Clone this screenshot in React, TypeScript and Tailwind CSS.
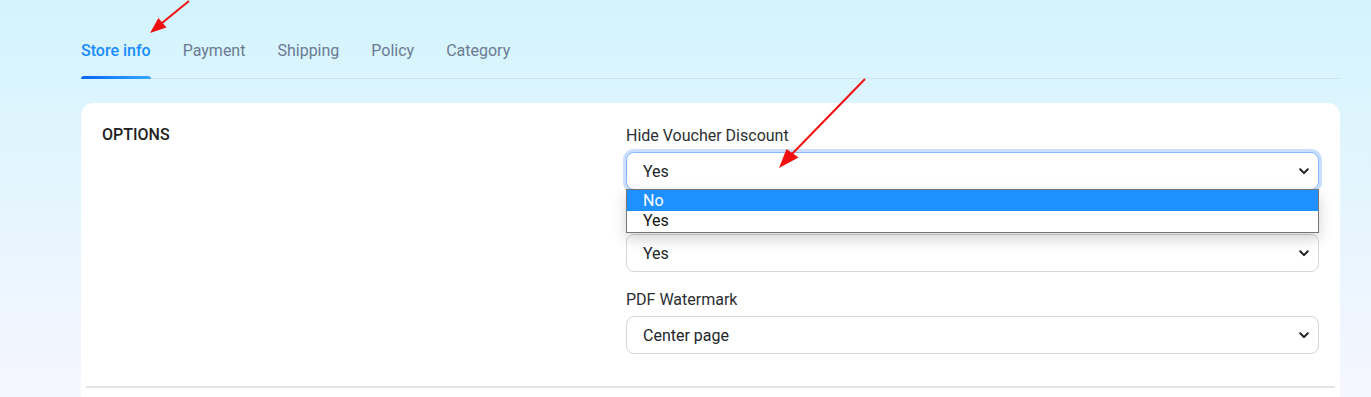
import React from "react";

const tabs = ["Store info", "Payment", "Shipping", "Policy", "Category"];

function Chevron() {
  return (
    <svg width="10" height="7" viewBox="0 0 10 7" className="text-[#222]">
      <path d="M1.2 1.3 5 5.1 8.8 1.3" fill="none" stroke="currentColor" strokeWidth="2" strokeLinecap="round" strokeLinejoin="round" />
    </svg>
  );
}

function FakeSelect({ value, focused }: { value: string; focused?: boolean }) {
  return (
    <div
      className={
        "flex h-[38px] items-center justify-between rounded-lg bg-white pl-4 pr-[9px] pt-[1px] text-[16px] text-[#212529] " +
        (focused ? "border border-[#86b7fe] shadow-[0_0_0_3px_rgba(13,110,253,0.22)]" : "border border-[#d4d7dc]")
      }
    >
      <span>{value}</span>
      <Chevron />
    </div>
  );
}

export default function App() {
  return (
    <div className="relative h-[397px] overflow-hidden bg-gradient-to-b from-[#d3f4fd] to-[#f6f6ff] font-['Roboto',sans-serif]">
      <div className="pl-[81px] pr-[31px] pt-[32px]">
        {/* Tabs */}
        <div className="flex gap-8 border-b border-[#cfe4ee]">
          {tabs.map((t, i) => (
            <div
              key={t}
              className={
                "relative pb-[8px] text-[16px] leading-[38px] " +
                (i === 0 ? "font-medium text-[#1a8cff]" : "text-[#6b7b93]")
              }
            >
              {t}
              {i === 0 && (
                <span className="absolute bottom-[-1px] left-0 h-[3px] w-full rounded-t bg-gradient-to-r from-[#0b63f6] to-[#37a6ff]" />
              )}
            </div>
          ))}
        </div>

        {/* Card */}
        <div className="mt-6 rounded-xl bg-white pt-[22px] pb-[32px]">
          <div className="flex px-[21px]">
            <div className="w-[524px] shrink-0 text-[16px] font-medium leading-5 text-[#222]">OPTIONS</div>
            <div className="flex flex-1 flex-col gap-[17px]">
              <div className="relative">
                <div className="mb-[6px] pt-[1px] text-[16px] leading-5 text-[#2b2f33]">Hide Voucher Discount</div>
                <FakeSelect value="Yes" focused />
                <div className="absolute left-0 right-0 top-[64px] z-10 border border-[#767676] bg-white pb-[1px] text-[16px] leading-5 text-[#111] shadow-[0_6px_14px_rgba(0,0,0,0.18)]">
                  <div className="bg-[#1e90ff] pl-4 pt-[1px] text-white">No</div>
                  <div className="pl-4">Yes</div>
                </div>
              </div>
              <div>
                <div className="mb-[7px] h-5" />
                <FakeSelect value="Yes" />
              </div>
              <div>
                <div className="mb-[6px] pt-[1px] text-[16px] leading-5 text-[#2b2f33]">PDF Watermark</div>
                <FakeSelect value="Center page" />
              </div>
            </div>
          </div>
          <div className="mx-[5px] mt-[32px] h-[2px] bg-[#e4e4e4]" />
        </div>
      </div>

      {/* Annotation arrows */}
      <svg className="pointer-events-none absolute inset-0 z-20" width="1371" height="397" viewBox="0 0 1371 397">
        <line x1="189" y1="1" x2="162" y2="23" stroke="#f01010" strokeWidth="2" />
        <polygon points="150,33 166.5,27.6 158.4,18" fill="#f01010" />
        <line x1="865" y1="79" x2="792" y2="154" stroke="#f01010" strokeWidth="2" />
        <polygon points="779,168 798.5,157.5 786.5,149" fill="#f01010" />
      </svg>
    </div>
  );
}
